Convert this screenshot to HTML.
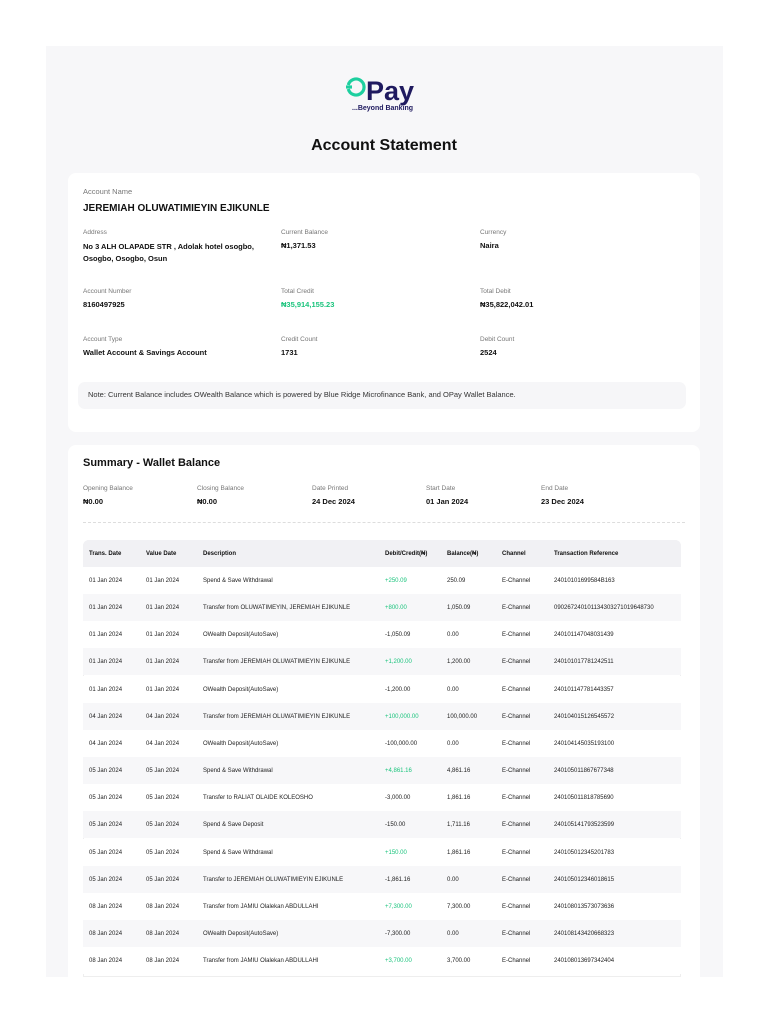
<!DOCTYPE html>
<html><head><meta charset="utf-8"><style>
*{margin:0;padding:0;box-sizing:border-box}
body{width:768px;height:1024px;background:#fff;font-family:"Liberation Sans",sans-serif;color:#111;position:relative;overflow:hidden}
.panel{position:absolute;left:46px;top:46px;width:677px;height:931px;background:#f7f7f9}
.card{position:absolute;background:#fff;border-radius:8px}
.a{position:absolute;white-space:nowrap}
.lab{font-size:7.5px;color:#777}
.val{font-size:8.5px;font-weight:bold;color:#111}
.g{color:#1bc47d}
.row{position:absolute;left:83px;width:598px;height:27px;font-size:6px;color:#222}
.row span{position:absolute;top:11px;white-space:nowrap}
</style></head><body>
<div class="panel"></div>
<svg class="a" style="left:344px;top:74px" width="84" height="40" viewBox="0 0 84 40">
<path d="M4.3 15 A8 8 0 1 0 4.3 11" fill="none" stroke="#1dcf9f" stroke-width="3.2"/>
<rect x="2" y="11.4" width="6" height="3.2" fill="#1dcf9f"/>
<text x="22" y="26" font-family="Liberation Sans" font-weight="bold" font-size="27" fill="#1f1a5f">Pay</text>
<text x="8" y="36" font-family="Liberation Sans" font-weight="bold" font-size="7" fill="#1f1a5f">...Beyond Banking</text>
</svg>
<div class="a" style="left:0;width:768px;text-align:center;top:137px;font-size:16px;font-weight:bold">Account Statement</div>
<div class="card" style="left:68px;top:173px;width:632px;height:259px"></div>
<div class="a lab" style="left:83px;top:187px">Account Name</div>
<div class="a" style="left:83px;top:203px;font-size:10px;font-weight:bold">JEREMIAH OLUWATIMIEYIN EJIKUNLE</div>
<div class="a lab" style="left:83px;top:229px;font-size:6.5px">Address</div>
<div class="a val" style="left:83px;top:241px;font-size:7.5px;line-height:12px">No 3 ALH OLAPADE STR , Adolak hotel osogbo,<br>Osogbo, Osogbo, Osun</div>
<div class="a lab" style="left:281px;top:229px;font-size:6.5px">Current Balance</div>
<div class="a val" style="left:281px;top:241px;font-size:7.5px">₦1,371.53</div>
<div class="a lab" style="left:480px;top:229px;font-size:6.5px">Currency</div>
<div class="a val" style="left:480px;top:241px;font-size:7.5px">Naira</div>
<div class="a lab" style="left:83px;top:288px;font-size:6.5px">Account Number</div>
<div class="a val" style="left:83px;top:300px;font-size:7.5px">8160497925</div>
<div class="a lab" style="left:281px;top:288px;font-size:6.5px">Total Credit</div>
<div class="a val g" style="left:281px;top:300px;font-size:7.5px">₦35,914,155.23</div>
<div class="a lab" style="left:480px;top:288px;font-size:6.5px">Total Debit</div>
<div class="a val" style="left:480px;top:300px;font-size:7.5px">₦35,822,042.01</div>
<div class="a lab" style="left:83px;top:336px;font-size:6.5px">Account Type</div>
<div class="a val" style="left:83px;top:348px;font-size:7.5px">Wallet Account &amp; Savings Account</div>
<div class="a lab" style="left:281px;top:336px;font-size:6.5px">Credit Count</div>
<div class="a val" style="left:281px;top:348px;font-size:7.5px">1731</div>
<div class="a lab" style="left:480px;top:336px;font-size:6.5px">Debit Count</div>
<div class="a val" style="left:480px;top:348px;font-size:7.5px">2524</div>
<div class="a" style="left:78px;top:382px;width:608px;height:27px;background:#f6f6f8;border-radius:7px"></div>
<div class="a" style="left:88px;top:390px;font-size:7.5px;color:#333">Note: Current Balance includes OWealth Balance which is powered by Blue Ridge Microfinance Bank, and OPay Wallet Balance.</div>
<div class="card" style="left:68px;top:445px;width:632px;height:532px;border-radius:8px 8px 0 0"></div>
<div class="a" style="left:83px;top:457px;font-size:11px;font-weight:bold">Summary - Wallet Balance</div>
<div class="a lab" style="left:83px;top:485px;font-size:6.5px">Opening Balance</div><div class="a val" style="left:83px;top:497px;font-size:7.5px">₦0.00</div>
<div class="a lab" style="left:197px;top:485px;font-size:6.5px">Closing Balance</div><div class="a val" style="left:197px;top:497px;font-size:7.5px">₦0.00</div>
<div class="a lab" style="left:312px;top:485px;font-size:6.5px">Date Printed</div><div class="a val" style="left:312px;top:497px;font-size:7.5px">24 Dec 2024</div>
<div class="a lab" style="left:426px;top:485px;font-size:6.5px">Start Date</div><div class="a val" style="left:426px;top:497px;font-size:7.5px">01 Jan 2024</div>
<div class="a lab" style="left:541px;top:485px;font-size:6.5px">End Date</div><div class="a val" style="left:541px;top:497px;font-size:7.5px">23 Dec 2024</div>
<div class="a" style="left:83px;top:522px;width:602px;border-top:1px dashed #ddd"></div>
<div class="a" style="left:83px;top:540px;width:598px;height:437px;border:1px solid #eee;border-radius:6px 6px 0 0"></div>
<div class="row" style="top:540px;background:#f1f1f4;border-radius:6px 6px 0 0;font-weight:bold;color:#111;height:27px">
<span style="left:6px">Trans. Date</span><span style="left:63px">Value Date</span><span style="left:120px">Description</span><span style="left:302px">Debit/Credit(₦)</span><span style="left:364px">Balance(₦)</span><span style="left:419px">Channel</span><span style="left:471px">Transaction Reference</span></div>
<div id="rows"></div>
<script>
const d=[
["01 Jan 2024","Spend & Save Withdrawal","+250.09","250.09","24010101699584B163"],
["01 Jan 2024","Transfer from OLUWATIMEYIN, JEREMIAH EJIKUNLE","+800.00","1,050.09","090267240101134303271019648730"],
["01 Jan 2024","OWealth Deposit(AutoSave)","-1,050.09","0.00","240101147048031439"],
["01 Jan 2024","Transfer from JEREMIAH OLUWATIMIEYIN EJIKUNLE","+1,200.00","1,200.00","240101017781242511"],
["01 Jan 2024","OWealth Deposit(AutoSave)","-1,200.00","0.00","240101147781443357"],
["04 Jan 2024","Transfer from JEREMIAH OLUWATIMIEYIN EJIKUNLE","+100,000.00","100,000.00","240104015126545572"],
["04 Jan 2024","OWealth Deposit(AutoSave)","-100,000.00","0.00","240104145035193100"],
["05 Jan 2024","Spend & Save Withdrawal","+4,861.16","4,861.16","240105011867677348"],
["05 Jan 2024","Transfer to RALIAT OLAIDE KOLEOSHO","-3,000.00","1,861.16","240105011818785690"],
["05 Jan 2024","Spend & Save Deposit","-150.00","1,711.16","240105141793523599"],
["05 Jan 2024","Spend & Save Withdrawal","+150.00","1,861.16","240105012345201783"],
["05 Jan 2024","Transfer to JEREMIAH OLUWATIMIEYIN EJIKUNLE","-1,861.16","0.00","240105012346018615"],
["08 Jan 2024","Transfer from JAMIU Olalekan ABDULLAHI","+7,300.00","7,300.00","240108013573073636"],
["08 Jan 2024","OWealth Deposit(AutoSave)","-7,300.00","0.00","240108143420668323"],
["08 Jan 2024","Transfer from JAMIU Olalekan ABDULLAHI","+3,700.00","3,700.00","240108013697342404"]];
let h="";d.forEach((r,i)=>{h+=`<div class="row" style="top:${567+i*27.15}px;background:${i%2?'#f7f7f9':'#fff'}"><span style="left:6px">${r[0]}</span><span style="left:63px">${r[0]}</span><span style="left:120px">${r[1].replace('&','&amp;')}</span><span style="left:302px;color:${r[2][0]=='+'?'#1bc47d':'#222'}">${r[2]}</span><span style="left:364px">${r[3]}</span><span style="left:419px">E-Channel</span><span style="left:471px">${r[4]}</span></div>`});
document.getElementById('rows').outerHTML=h;
</script>
</body></html>
